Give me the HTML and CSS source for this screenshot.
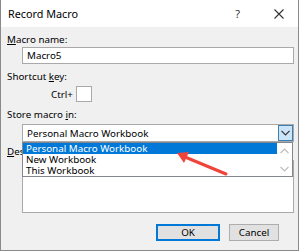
FILE: index.html
```html
<!DOCTYPE html>
<html lang="en">
<head>
    <meta charset="UTF-8">
    <title>Record Macro</title>
    <link rel="stylesheet" href="styles.css">
</head>
<body>
    <div class="dialog">
        <div class="titlebar">
            <span class="title">Record Macro</span>
            <span class="help">?</span>
            <svg class="close" width="10" height="10" viewBox="0 0 10 10">
                <path d="M0.5 0.5 L9.5 9.5 M9.5 0.5 L0.5 9.5" stroke="#333" stroke-width="1.1" fill="none"/>
            </svg>
        </div>
        <div class="content">
            <div class="label"><u>M</u>acro name:</div>
            <div class="textbox">Macro5</div>

            <div class="label gap-7">Shortcut <u>k</u>ey:</div>
            <div class="shortcut">
                <span>Ctrl+</span>
                <div class="keybox"></div>
            </div>

            <div class="label gap-7">Store macro <u>i</u>n:</div>
            <div class="select">
                <span>Personal Macro Workbook</span>
                <div class="select-btn">
                    <svg width="9" height="6" viewBox="0 0 9 6">
                        <path d="M0.5 0.8 L4.5 4.8 L8.5 0.8" stroke="#333" stroke-width="1.2" fill="none"/>
                    </svg>
                </div>
            </div>

            <div class="label desc-label"><u>D</u>escription:</div>
            <div class="textarea"></div>

            <div class="buttons">
                <button class="btn default">OK</button>
                <button class="btn">Cancel</button>
            </div>

            <!-- open dropdown list, lies over the description field -->
            <div class="dropdown">
                <div class="options">
                    <div class="option selected">Personal Macro Workbook</div>
                    <div class="option">New Workbook</div>
                    <div class="option">This Workbook</div>
                </div>
                <div class="scrollbar">
                    <svg width="9" height="6" viewBox="0 0 9 6">
                        <path d="M0.5 5 L4.5 1 L8.5 5" stroke="#bdbdbd" stroke-width="1.2" fill="none"/>
                    </svg>
                    <svg width="9" height="6" viewBox="0 0 9 6">
                        <path d="M0.5 1 L4.5 5 L8.5 1" stroke="#bdbdbd" stroke-width="1.2" fill="none"/>
                    </svg>
                </div>
            </div>
        </div>

        <svg class="arrow" width="60" height="30" viewBox="0 0 60 30">
            <path d="M50 23 L9 6" stroke="#f0443a" stroke-width="3" stroke-linecap="round" fill="none"/>
            <path d="M1 2 L13 1 L8 12 Z" fill="#f0443a"/>
        </svg>
    </div>
</body>
</html>
```

FILE: styles.css
```css
body {
    margin: 0;
    font-family: "Noto Sans", "Open Sans", sans-serif;
    font-size: 9.8px;
    color: #000;
    background: #fff;
}
.dialog {
    position: relative;
    width: 297px;
    height: 250px;
    border-left: 1px solid #8a8a8a;
    border-right: 1px solid #8a8a8a;
    border-bottom: 1px solid #8a8a8a;
    background: #f0f0f0;
    display: flex;
    flex-direction: column;
}
.titlebar {
    height: 27px;
    background: #fff;
    display: flex;
    align-items: center;
    padding-left: 7px;
    flex-shrink: 0;
}
.title {
    font-size: 10.8px;
    flex: 1;
}
.help {
    font-size: 11px;
    color: #333;
    margin-right: 34px;
}
.close {
    margin-right: 14px;
}
.content {
    position: relative;
    padding: 0 4px 0 6px;
}
.label {
    height: 12px;
    line-height: 12px;
    margin-top: 7px;
}
.gap-7 {
    margin-top: 7px;
}
.textbox {
    margin: 1px 0 0 15px;
    height: 15px;
    line-height: 15px;
    border: 1px solid #a9a9a9;
    background: #fff;
    padding-left: 4px;
}
.shortcut {
    display: flex;
    align-items: center;
    margin: 3px 0 0 44px;
    height: 16px;
}
.keybox {
    width: 14px;
    height: 14px;
    border: 1px solid #a9a9a9;
    background: #fff;
    margin-left: 3px;
}
.select {
    display: flex;
    align-items: center;
    margin: 3px 0 0 15px;
    height: 16px;
    border: 1px solid #a9a9a9;
    background: #fff;
    padding-left: 4px;
}
.select span {
    flex: 1;
}
.select-btn {
    width: 13px;
    height: 14px;
    border: 1px solid #3c7fb1;
    background: #cce4f7;
    display: flex;
    align-items: center;
    justify-content: center;
}
.desc-label {
    margin-top: 4px;
}
.textarea {
    margin: 2px 0 0 15px;
    height: 51px;
    border: 1px solid #a9a9a9;
    background: #fff;
}
.buttons {
    display: flex;
    justify-content: flex-end;
    gap: 9px;
    margin: 11px 15px 0 0;
}
.btn {
    font-family: inherit;
    font-size: 9.8px;
    height: 17px;
    padding: 0;
    border: 1px solid #adadad;
    background: #e1e1e1;
    color: #000;
}
.btn.default {
    width: 64px;
    border: 2px solid #0078d7;
}
.btn + .btn {
    width: 50px;
}
.dropdown {
    position: absolute;
    top: 115px;
    left: 21px;
    width: 269px;
    height: 33px;
    border: 1px solid #828790;
    background: #fff;
    display: flex;
}
.options {
    flex: 1;
}
.option {
    height: 11px;
    line-height: 11px;
    padding-left: 3px;
}
.option.selected {
    background: #0078d7;
    color: #fff;
}
.scrollbar {
    width: 15px;
    background: #fff;
    display: flex;
    flex-direction: column;
    align-items: center;
    justify-content: space-between;
    padding: 5px 0 4px;
}
.arrow {
    position: absolute;
    left: 175px;
    top: 151px;
}
```
